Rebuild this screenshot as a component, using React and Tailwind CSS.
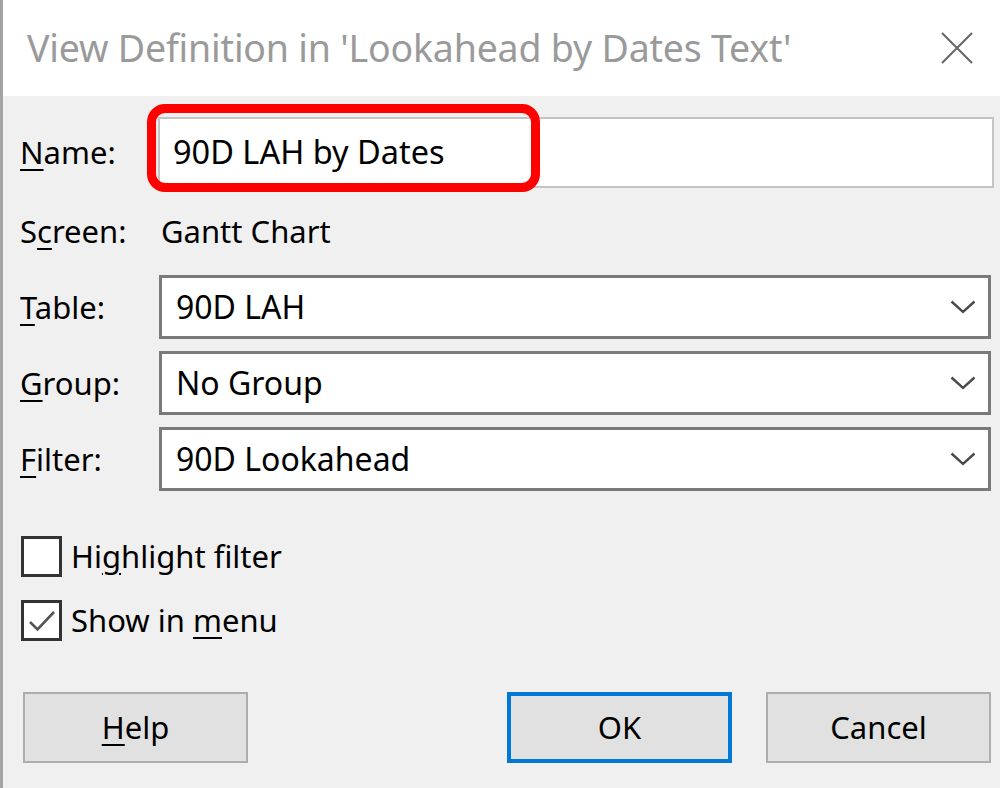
import React from 'react';

const font = { fontFamily: '"Segoe UI", "Noto Sans", "Open Sans", sans-serif' };

const Chevron = () => (
  <svg width="26" height="14" viewBox="0 0 26 14" className="shrink-0">
    <path d="M1.5 1.5 L13 12 L24.5 1.5" fill="none" stroke="#4a4a4a" strokeWidth="2.4" />
  </svg>
);

const Combo = ({ label, u, rest, value }) => (
  <div className="flex items-center h-[64px] mb-[12px]">
    <div className="w-[139px] text-[31px] text-black">
      <u className="underline-offset-[5px] decoration-[2px]">{u}</u>
      {rest}
    </div>
    <div className="flex-1 h-full mr-[9px] bg-white border-[3px] border-[#7a7a7a] flex items-center pl-[14px] pr-[12px]">
      <span className="flex-1 text-[32px] text-black">{value}</span>
      <Chevron />
    </div>
  </div>
);

const CheckRow = ({ checked, children }) => (
  <div className="flex items-center h-[41px] pl-[1px]">
    <div className="w-[41px] h-[41px] border-[3px] border-[#333333] bg-white flex items-center justify-center">
      {checked && (
        <svg width="30" height="24" viewBox="0 0 30 24">
          <path d="M3 13 L10.5 20.5 L27 3" fill="none" stroke="#555555" strokeWidth="2.6" />
        </svg>
      )}
    </div>
    <span className="ml-[9px] text-[31px] text-black">{children}</span>
  </div>
);

const Button = ({ children, primary }) => (
  <div
    className={
      'h-[71px] w-[225px] bg-[#e1e1e1] flex items-center justify-center text-[31px] text-black ' +
      (primary ? 'border-[4px] border-[#0078d7]' : 'border-[2px] border-[#adadad]')
    }
  >
    {children}
  </div>
);

export default function App() {
  return (
    <div style={font} className="w-[1000px] h-[788px] overflow-hidden flex flex-col bg-[#f0f0f0] border-l-[3px] border-[#a3a3a3]">
      <div className="h-[96px] bg-white flex items-center pl-[24px] pr-[26px] shrink-0">
        <span className="flex-1 text-[37.5px] text-[#9a9a9a] tracking-[-0.2px]">
          View Definition in 'Lookahead by Dates Text'
        </span>
        <svg width="34" height="34" viewBox="0 0 34 34">
          <path d="M2 2 L32 32 M32 2 L2 32" stroke="#666666" strokeWidth="2" fill="none" />
        </svg>
      </div>

      <div className="flex-1 flex flex-col pl-[17px] pt-[21px]">
        <div className="flex items-center h-[71px]">
          <div className="w-[138px] text-[31px] text-black">
            <u className="underline-offset-[5px] decoration-[2px]">N</u>ame:
          </div>
          <div className="relative flex-1 h-full mr-[6px] bg-white border-[2px] border-[#c4c4c4] flex items-center pl-[13px]">
            <span className="text-[32.5px] text-black">90D LAH by Dates</span>
            <div className="absolute left-[-13px] top-[-15px] w-[393px] h-[88px] border-[9px] border-[#ff0000] rounded-[18px]" />
          </div>
        </div>

        <div className="flex items-center h-[87px] text-[31px] text-black">
          <div className="w-[141px]">
            S<u className="underline-offset-[5px] decoration-[2px]">c</u>reen:
          </div>
          <span>Gantt Chart</span>
        </div>

        <Combo u="T" rest="able:" value="90D LAH" />
        <Combo u="G" rest="roup:" value="No Group" />
        <Combo u="F" rest="ilter:" value="90D Lookahead" />

        <div className="mt-[33px] flex flex-col gap-[23px]">
          <CheckRow>
            Hi<u className="underline-offset-[5px] decoration-[2px]">g</u>hlight filter
          </CheckRow>
          <CheckRow checked>
            Show in <u className="underline-offset-[5px] decoration-[2px]">m</u>enu
          </CheckRow>
        </div>

        <div className="mt-[51px] flex items-center pl-[3px] pr-[9px]">
          <Button>
            <u className="underline-offset-[5px] decoration-[2px]">H</u>elp
          </Button>
          <div className="flex-1" />
          <Button primary>OK</Button>
          <div className="w-[34px]" />
          <Button>Cancel</Button>
        </div>
      </div>
    </div>
  );
}
